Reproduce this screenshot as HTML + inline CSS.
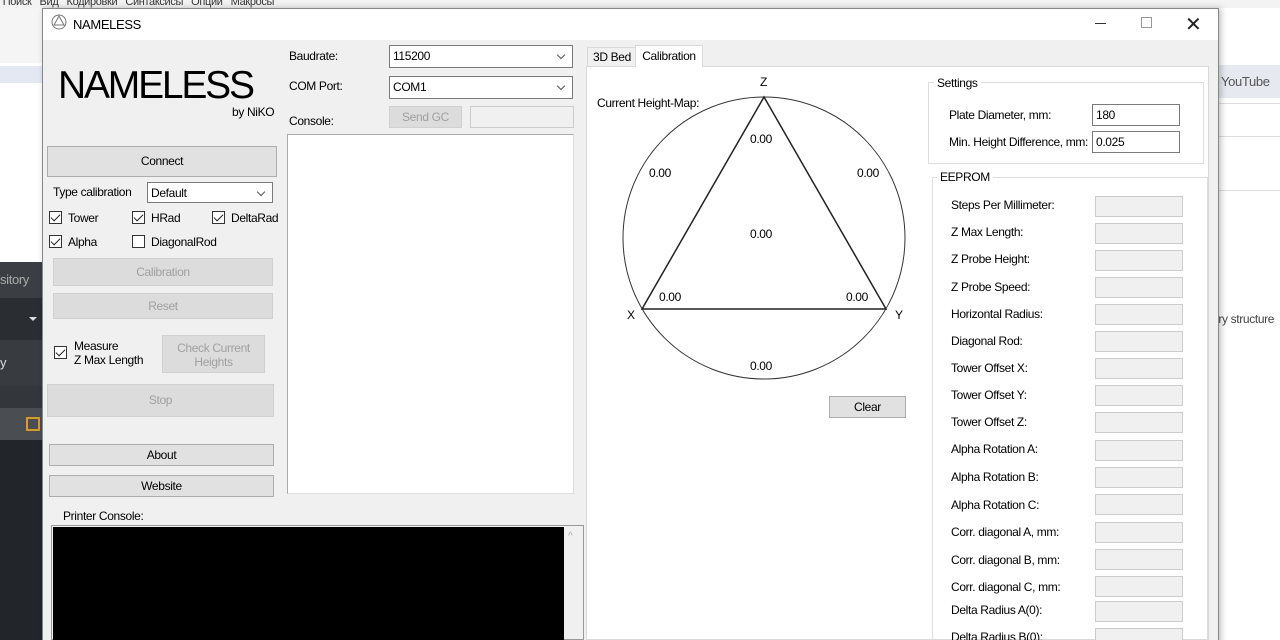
<!DOCTYPE html>
<html><head><meta charset="utf-8"><style>
*{box-sizing:border-box;margin:0;padding:0}
html,body{width:1280px;height:640px;overflow:hidden}
body{background:#fff;font-family:"Liberation Sans",sans-serif;font-size:12px;color:#000;position:relative;letter-spacing:-0.35px}
.a{position:absolute;white-space:nowrap}
.btn{position:absolute;background:#e1e1e1;border:1px solid #adadad;text-align:center;color:#000}
.dis{background:#dcdcdc;border:1px solid #d0d0d0;color:#a0a0a0}
.inp{position:absolute;background:#fff;border:1px solid #7a7a7a;padding:3px 3px 0}
.cb{position:absolute;width:13px;height:13px;border:1px solid #333;background:#fff}
.cb.c::after{content:"";position:absolute;left:3px;top:0px;width:4px;height:8px;border:solid #222;border-width:0 1.5px 1.5px 0;transform:rotate(45deg)}
.ro{position:absolute;left:1095px;width:88px;height:21px;background:#f0f0f0;border:1px solid #ccc}
.lb{position:absolute;left:951px;white-space:nowrap}
.dd::after{content:"";position:absolute;right:8px;top:6px;width:5px;height:5px;border:solid #555;border-width:0 1px 1px 0;transform:rotate(45deg)}
</style></head><body>
<div class="a" style="left:0;top:0;width:1280px;height:8px;background:#f3f3f3;font-size:11px;color:#333;overflow:hidden;line-height:4px">&nbsp;Поиск &nbsp; Вид &nbsp; Кодировки &nbsp; Синтаксисы &nbsp; Опции &nbsp; Макросы</div>
<div class="a" style="left:0;top:8px;width:42px;height:55px;background:#f5f5f5"></div>
<div class="a" style="left:0;top:66px;width:42px;height:17px;background:#e4e8f2"></div>
<div class="a" style="left:0;top:262px;width:42px;height:378px;background:#22252a"></div>
<div class="a" style="left:0;top:262px;width:42px;height:36px;background:#3b3f44;color:#aaa;font-size:13px;line-height:36px">sitory</div>
<div class="a" style="left:0;top:298px;width:42px;height:42px;background:#2a2d31"><div class="a" style="left:29px;top:19px;border:4px solid transparent;border-top:4px solid #ddd"></div></div>
<div class="a" style="left:0;top:340px;width:42px;height:46px;background:#383c41;color:#ddd;font-size:13px;line-height:46px">y</div>
<div class="a" style="left:0;top:386px;width:42px;height:22px;background:#33373c"></div>
<div class="a" style="left:0;top:408px;width:42px;height:32px;background:#4a4e53"><div class="a" style="left:26px;top:9px;width:14px;height:14px;border:2px solid #d99a2a"></div></div>
<div class="a" style="left:1219px;top:65px;width:61px;height:33px;background:#e7e9f0;color:#555;font-size:13px;line-height:33px;padding-left:2px">YouTube</div>
<div class="a" style="left:1219px;top:103px;width:61px;height:1px;background:#ddd"></div>
<div class="a" style="left:1219px;top:136px;width:61px;height:1px;background:#ddd"></div>
<div class="a" style="left:1219px;top:190px;width:61px;height:1px;background:#ddd"></div>
<div class="a" style="left:1212px;top:312px;color:#444;font-size:12px">ory structure</div>
<div class="a" style="left:42px;top:8px;width:1177px;height:640px;background:#f0f0f0;border:1px solid #888;box-shadow:2px 0 6px rgba(0,0,0,.25)"></div>
<div class="a" style="left:43px;top:9px;width:1175px;height:31px;background:#fff"></div>
<svg class="a" style="left:51px;top:14px" width="16" height="16"><circle cx="8" cy="8" r="7" fill="none" stroke="#777"/><path d="M8 2 L3 11 L13 11 Z" fill="none" stroke="#777"/></svg>
<div class="a" style="left:73px;top:17px;font-size:13px">NAMELESS</div>
<div class="a" style="left:1095px;top:23px;width:11px;height:1px;background:#333"></div>
<div class="a" style="left:1141px;top:17px;width:11px;height:11px;border:1px solid #999"></div>
<div class="a" style="left:1185px;top:12px;font-size:20px;color:#222">✕</div>
<div class="a" style="left:58px;top:64px;font-size:39px;letter-spacing:-2.2px">NAMELESS</div>
<div class="a" style="left:232px;top:105px">by NiKO</div>
<div class="btn" style="left:47px;top:146px;width:230px;height:31px;line-height:29px">Connect</div>
<div class="a" style="left:53px;top:185px">Type calibration</div>
<div class="inp dd" style="left:147px;top:182px;width:126px;height:21px">Default</div>
<div class="cb c" style="left:49px;top:211px"></div><div class="a" style="left:68px;top:211px">Tower</div>
<div class="cb c" style="left:132px;top:211px"></div><div class="a" style="left:151px;top:211px">HRad</div>
<div class="cb c" style="left:212px;top:211px"></div><div class="a" style="left:231px;top:211px">DeltaRad</div>
<div class="cb c" style="left:49px;top:235px"></div><div class="a" style="left:68px;top:235px">Alpha</div>
<div class="cb" style="left:132px;top:235px"></div><div class="a" style="left:151px;top:235px">DiagonalRod</div>
<div class="btn dis" style="left:53px;top:258px;width:220px;height:28px;line-height:26px">Calibration</div>
<div class="btn dis" style="left:53px;top:293px;width:220px;height:26px;line-height:24px">Reset</div>
<div class="cb c" style="left:54px;top:346px"></div>
<div class="a" style="left:74px;top:339px;line-height:14px">Measure<br>Z Max Length</div>
<div class="btn dis" style="left:162px;top:335px;width:103px;height:38px;line-height:14px;padding-top:5px">Check Current<br>Heights</div>
<div class="btn dis" style="left:47px;top:384px;width:227px;height:33px;line-height:31px">Stop</div>
<div class="btn" style="left:49px;top:444px;width:225px;height:22px;line-height:20px">About</div>
<div class="btn" style="left:49px;top:475px;width:225px;height:22px;line-height:20px">Website</div>
<div class="a" style="left:63px;top:509px">Printer Console:</div>
<div class="a" style="left:51px;top:525px;width:533px;height:115px;border:1px solid #999;background:#f0f0f0"></div>
<div class="a" style="left:53px;top:527px;width:511px;height:113px;background:#000"></div>
<div class="a" style="left:568px;top:531px;color:#aaa;font-size:10px">^</div>
<div class="a" style="left:289px;top:49px">Baudrate:</div>
<div class="inp dd" style="left:389px;top:45px;width:184px;height:23px">115200</div>
<div class="a" style="left:289px;top:79px">COM Port:</div>
<div class="inp dd" style="left:389px;top:76px;width:184px;height:23px">COM1</div>
<div class="a" style="left:289px;top:114px">Console:</div>
<div class="btn dis" style="left:389px;top:106px;width:73px;height:22px;line-height:20px">Send GC</div>
<div class="a" style="left:470px;top:106px;width:104px;height:22px;border:1px solid #ccc;background:#f0f0f0"></div>
<div class="a" style="left:287px;top:134px;width:287px;height:360px;background:#fff;border:1px solid #aaa;border-right-color:#ddd;border-bottom-color:#ddd"></div>
<div class="a" style="left:586px;top:66px;width:623px;height:574px;background:#fff;border:1px solid #d9d9d9"></div>
<div class="a" style="left:587px;top:47px;width:50px;height:20px;background:#f0f0f0;border:1px solid #d9d9d9;text-align:center;line-height:19px">3D Bed</div>
<div class="a" style="left:635px;top:45px;width:68px;height:22px;background:#fff;border:1px solid #d9d9d9;border-bottom:none;text-align:center;line-height:20px">Calibration</div>
<div class="a" style="left:597px;top:96px">Current Height-Map:</div>
<svg class="a" style="left:600px;top:70px" width="320" height="320">
<circle cx="164" cy="168" r="141" fill="none" stroke="#333" stroke-width="1"/>
<path d="M164 27 L42 239 L286 239 Z" fill="none" stroke="#222" stroke-width="1.5"/>
<g font-family="Liberation Sans" font-size="12" fill="#000">
<text x="160" y="16">Z</text><text x="27" y="249">X</text><text x="295" y="249">Y</text>
<text x="150" y="73">0.00</text><text x="49" y="107">0.00</text><text x="257" y="107">0.00</text>
<text x="150" y="168">0.00</text><text x="59" y="231">0.00</text><text x="246" y="231">0.00</text>
<text x="150" y="300">0.00</text></g></svg>
<div class="btn" style="left:829px;top:396px;width:77px;height:22px;line-height:20px">Clear</div>
<div class="a" style="left:928px;top:82px;width:276px;height:82px;border:1px solid #ddd"></div>
<div class="a" style="left:934px;top:76px;background:#fff;padding:0 3px">Settings</div>
<div class="a" style="left:949px;top:108px">Plate Diameter, mm:</div>
<div class="inp" style="left:1092px;top:104px;width:88px;height:22px">180</div>
<div class="a" style="left:949px;top:135px">Min. Height Difference, mm:</div>
<div class="inp" style="left:1092px;top:131px;width:88px;height:22px">0.025</div>
<div class="a" style="left:932px;top:177px;width:276px;height:470px;border:1px solid #ddd"></div>
<div class="a" style="left:937px;top:170px;background:#fff;padding:0 3px">EEPROM</div>
<div class="lb" style="top:198px">Steps Per Millimeter:</div><div class="ro" style="top:196px"></div>
<div class="lb" style="top:225px">Z Max Length:</div><div class="ro" style="top:223px"></div>
<div class="lb" style="top:252px">Z Probe Height:</div><div class="ro" style="top:250px"></div>
<div class="lb" style="top:280px">Z Probe Speed:</div><div class="ro" style="top:277px"></div>
<div class="lb" style="top:307px">Horizontal Radius:</div><div class="ro" style="top:304px"></div>
<div class="lb" style="top:334px">Diagonal Rod:</div><div class="ro" style="top:331px"></div>
<div class="lb" style="top:361px">Tower Offset X:</div><div class="ro" style="top:358px"></div>
<div class="lb" style="top:388px">Tower Offset Y:</div><div class="ro" style="top:385px"></div>
<div class="lb" style="top:415px">Tower Offset Z:</div><div class="ro" style="top:412px"></div>
<div class="lb" style="top:442px">Alpha Rotation A:</div><div class="ro" style="top:440px"></div>
<div class="lb" style="top:470px">Alpha Rotation B:</div><div class="ro" style="top:467px"></div>
<div class="lb" style="top:498px">Alpha Rotation C:</div><div class="ro" style="top:494px"></div>
<div class="lb" style="top:525px">Corr. diagonal A, mm:</div><div class="ro" style="top:522px"></div>
<div class="lb" style="top:553px">Corr. diagonal B, mm:</div><div class="ro" style="top:549px"></div>
<div class="lb" style="top:580px">Corr. diagonal C, mm:</div><div class="ro" style="top:576px"></div>
<div class="lb" style="top:603px">Delta Radius A(0):</div><div class="ro" style="top:601px"></div>
<div class="lb" style="top:630px">Delta Radius B(0):</div><div class="ro" style="top:628px"></div>
</body></html>
